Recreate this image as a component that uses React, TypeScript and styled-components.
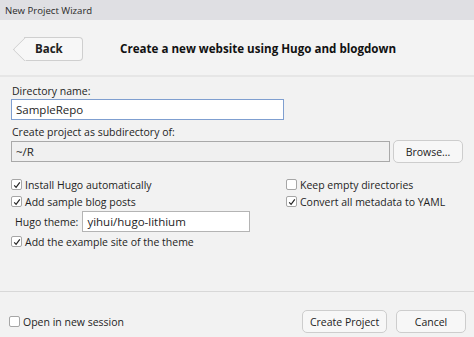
import React from "react";
import styled, { createGlobalStyle } from "styled-components";

const GlobalStyle = createGlobalStyle`
  html, body {
    margin: 0;
    padding: 0;
    background: #f2f2f2;
  }
  * {
    box-sizing: border-box;
  }
`;

const Window = styled.div`
  width: 474px;
  height: 337px;
  display: flex;
  flex-direction: column;
  background: #f2f2f2;
  font-family: "Open Sans", "Noto Sans", sans-serif;
  font-size: 10.5px;
  color: #1e1e1e;
  overflow: hidden;
`;

const TitleBar = styled.div`
  height: 20px;
  background: #dfdfe3;
  display: flex;
  align-items: center;
  padding-left: 5px;
  font-size: 9.6px;
  color: #2a2a2a;
`;

const Header = styled.div`
  height: 57px;
  display: flex;
  align-items: center;
  padding-left: 24px;
  border-bottom: 2px solid #e6e6e6;
  background: #f3f3f3;
`;

const BackButton = styled.button`
  position: relative;
  width: 59px;
  height: 24px;
  margin-top: 2px;
  border: 1px solid #cfcfcf;
  border-left: none;
  border-radius: 0 4px 4px 0;
  background: #f7f7f7;
  font-family: inherit;
  font-size: 11.5px;
  font-weight: 700;
  color: #222;
  text-align: left;
  padding: 0 0 0 11px;
  &::before {
    content: "";
    position: absolute;
    left: -8px;
    top: 3px;
    width: 16px;
    height: 16px;
    transform: rotate(45deg);
    border-left: 1px solid #cfcfcf;
    border-bottom: 1px solid #cfcfcf;
    background: #f7f7f7;
    border-radius: 0 0 0 2px;
  }
  span {
    position: relative;
  }
`;

const Heading = styled.div`
  margin-left: 37px;
  margin-top: 1px;
  font-size: 11.6px;
  font-weight: 700;
  color: #111;
`;

const Body = styled.div`
  flex: 1;
  padding: 6px 11px 0 11px;
  border-bottom: 1px solid #d8d8d8;
`;

const Label = styled.div<{ $gap?: number }>`
  line-height: 16px;
  height: 16px;
  padding-left: 1px;
  margin-top: ${(p) => p.$gap ?? 0}px;
`;

const TextBox = styled.div<{ $width: number; $focused?: boolean; $disabled?: boolean }>`
  width: ${(p) => p.$width}px;
  height: 21px;
  display: flex;
  align-items: center;
  padding-left: 4px;
  font-size: 11.5px;
  background: ${(p) => (p.$disabled ? "#f0f0f0" : "#ffffff")};
  border: 1px solid
    ${(p) => (p.$focused ? "#7f9fd0" : p.$disabled ? "#a9a9a9" : "#b4b4b4")};
`;

const PathRow = styled.div`
  display: flex;
  align-items: center;
  gap: 3px;
`;

const PushButton = styled.button<{ $width: number }>`
  width: ${(p) => p.$width}px;
  height: 23px;
  border: 1px solid #cdcdcd;
  border-radius: 5px;
  background: #f7f7f7;
  font-family: inherit;
  font-size: 10.5px;
  color: #222;
  padding: 0;
`;

const Options = styled.div`
  display: grid;
  grid-template-columns: 275px 1fr;
  margin-top: 13px;
`;

const Column = styled.div`
  display: flex;
  flex-direction: column;
`;

const CheckRow = styled.label`
  display: flex;
  align-items: center;
  height: 17px;
  gap: 3px;
`;

const Box = styled.span`
  width: 11px;
  height: 11px;
  border: 1px solid #a6a6a6;
  border-radius: 2px;
  background: #fff;
  display: flex;
  align-items: center;
  justify-content: center;
`;

const ThemeRow = styled.div`
  display: flex;
  align-items: center;
  gap: 4px;
  height: 23px;
  padding-left: 4px;
`;

const Footer = styled.div`
  height: 45px;
  display: flex;
  align-items: flex-start;
  padding: 18px 8px 0 9px;
  gap: 9px;
  & > label {
    margin-top: 3px;
  }
`;

const Spacer = styled.div`
  flex: 1;
`;

const Check: React.FC<{ checked?: boolean; children: React.ReactNode }> = ({
  checked,
  children,
}) => (
  <CheckRow>
    <Box>
      {checked && (
        <svg width="8" height="8" viewBox="0 0 8 8">
          <path d="M1.2 4.3 L3.1 6.3 L6.8 1.4" fill="none" stroke="#222" strokeWidth="1.2" />
        </svg>
      )}
    </Box>
    {children}
  </CheckRow>
);

const App: React.FC = () => {
  return (
    <>
      <GlobalStyle />
      <Window>
        <TitleBar>New Project Wizard</TitleBar>
        <Header>
          <BackButton>
            <span>Back</span>
          </BackButton>
          <Heading>Create a new website using Hugo and blogdown</Heading>
        </Header>
        <Body>
          <Label>Directory name:</Label>
          <TextBox $width={273} $focused>
            SampleRepo
          </TextBox>
          <Label $gap={4}>Create project as subdirectory of:</Label>
          <PathRow>
            <TextBox $width={379} $disabled>
              ~/R
            </TextBox>
            <PushButton $width={70}>Browse...</PushButton>
          </PathRow>
          <Options>
            <Column>
              <Check checked>Install Hugo automatically</Check>
              <Check checked>Add sample blog posts</Check>
              <ThemeRow>
                Hugo theme:
                <TextBox $width={168}>yihui/hugo-lithium</TextBox>
              </ThemeRow>
              <Check checked>Add the example site of the theme</Check>
            </Column>
            <Column>
              <Check>Keep empty directories</Check>
              <Check checked>Convert all metadata to YAML</Check>
            </Column>
          </Options>
        </Body>
        <Footer>
          <Check>Open in new session</Check>
          <Spacer />
          <PushButton $width={85}>Create Project</PushButton>
          <PushButton $width={70}>Cancel</PushButton>
        </Footer>
      </Window>
    </>
  );
};

export default App;
